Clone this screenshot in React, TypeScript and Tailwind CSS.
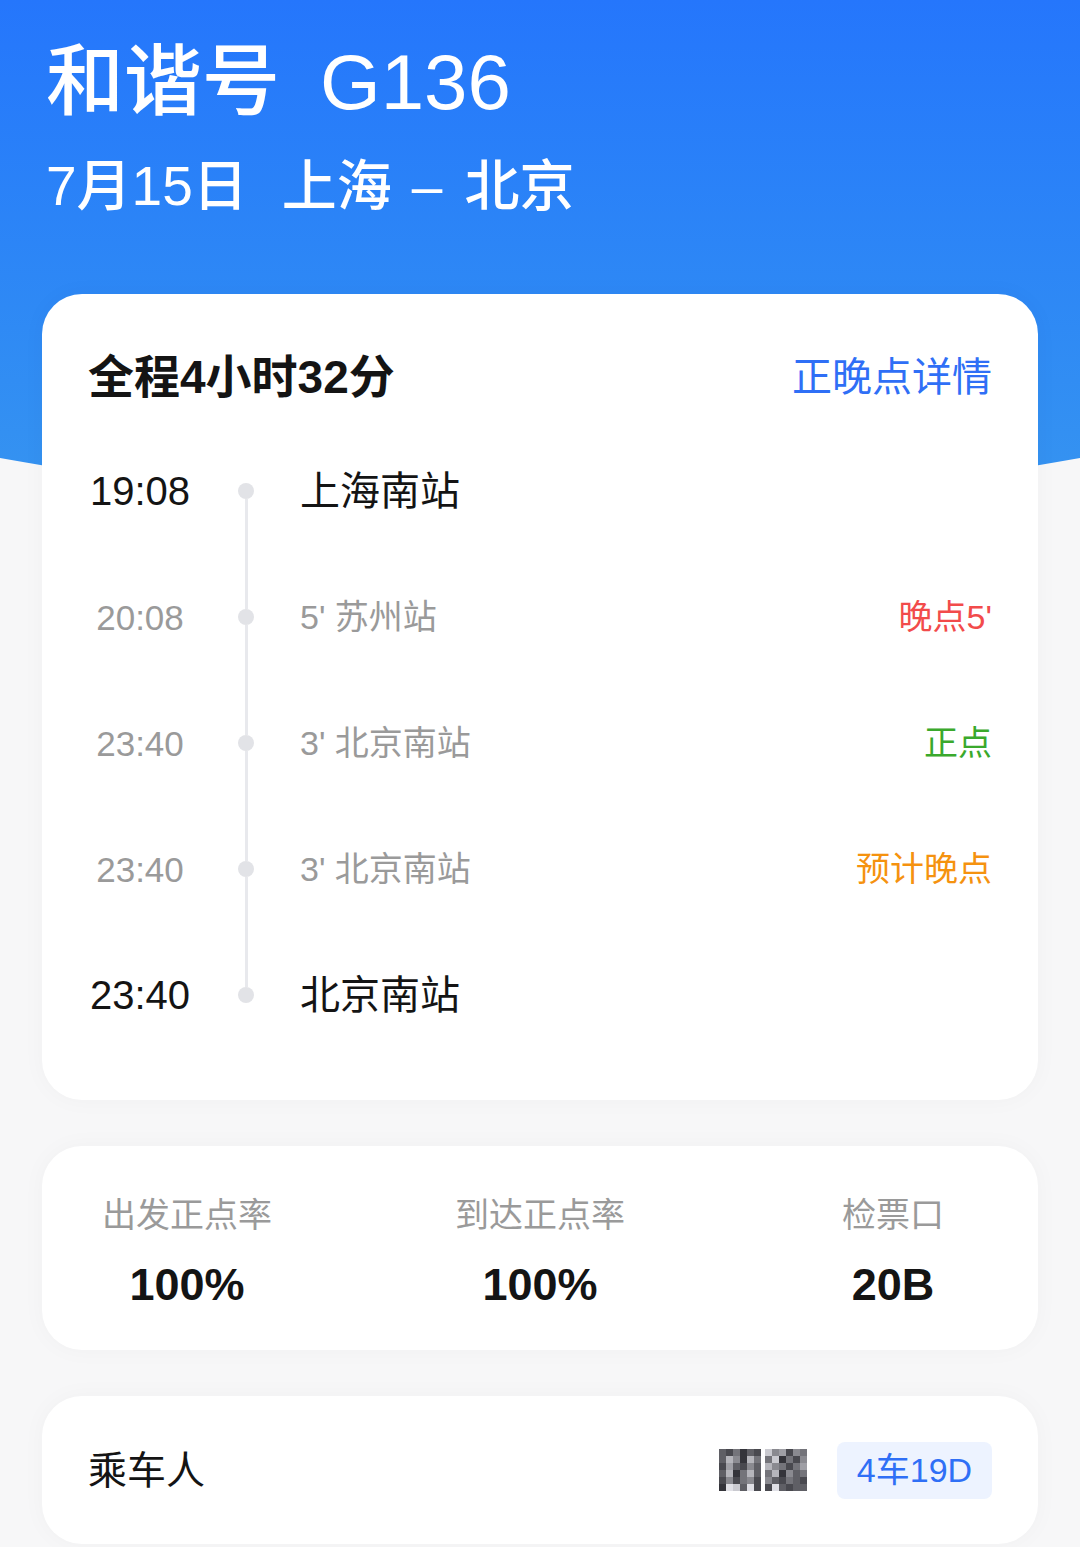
import React from "react";

const stops = [
  { time: "19:08", name: "上海南站", main: true },
  { time: "20:08", name: "5' 苏州站", status: "晚点5'", color: "text-[#f24b4b]" },
  { time: "23:40", name: "3' 北京南站", status: "正点", color: "text-[#3aa92c]" },
  { time: "23:40", name: "3' 北京南站", status: "预计晚点", color: "text-[#f5920f]" },
  { time: "23:40", name: "北京南站", main: true },
];

// rough mosaic of the blurred passenger name
const mosaic = [
  [0.7, 0.8, 0.6, 0.9, 0.7, 0.8, 0.2, 0.5, 0.4, 0.8, 0.5, 0.6],
  [0.7, 0.3, 0.5, 0.9, 0.3, 0.6, 0.6, 0.2, 0.9, 0.6, 0.8, 0.5],
  [0.8, 0.4, 0.7, 0.8, 0.5, 0.7, 0.3, 0.5, 0.6, 0.8, 0.6, 0.4],
  [0.7, 0.3, 0.9, 0.6, 0.3, 0.7, 0.6, 0.3, 0.9, 0.5, 0.7, 0.6],
  [0.8, 0.5, 0.8, 0.6, 0.5, 0.8, 0.5, 0.7, 0.8, 0.6, 0.7, 0.8],
  [0.9, 0.1, 0.2, 0.7, 0.1, 0.8, 0.8, 0.1, 0.7, 0.8, 0.7, 0.7],
];

const Mosaic = () => (
  <svg width="88" height="42" viewBox="0 0 88 42">
    {mosaic.map((row, r) =>
      row.map((v, c) => {
        const g = Math.round(245 - v * 215);
        return (
          <rect
            key={`${r}-${c}`}
            x={c * 7 + (c >= 6 ? 4 : 0)}
            y={r * 7}
            width="7"
            height="7"
            fill={`rgb(${g},${g},${g + 6})`}
          />
        );
      })
    )}
  </svg>
);

export default function App() {
  return (
    <div className="min-h-[1547px] w-[1080px] bg-[#f7f7f8] font-['Liberation_Sans','Noto_Sans_CJK_SC',sans-serif] text-[#141414]">
      <div className="h-[504px] bg-gradient-to-b from-[#2576fc] to-[#3694f0] px-[46px] pt-[43px] text-white [clip-path:ellipse(1294px_504px_at_50%_0)]">
        <div className="flex h-[78px] items-center text-[78px] font-medium leading-none">
          <span>和谐号</span>
          <span className="ml-[40px]">G136</span>
        </div>
        <div className="mt-[38px] flex h-[55px] items-center text-[55px] font-medium leading-none">
          <span>7月15日</span>
          <span className="ml-[34px]">上海</span>
          <span className="ml-[20px]">–</span>
          <span className="ml-[22px]">北京</span>
        </div>
      </div>

      <div className="relative z-10 -mt-[210px] flex flex-col gap-[46px] px-[42px] pb-[4px]">
        <div className="rounded-[40px] bg-white px-[46px] pb-[42px] pt-[54px] shadow-[0_0_24px_rgba(0,0,0,0.03)]">
          <div className="flex h-[58px] items-center justify-between">
            <span className="text-[46px] font-bold leading-none">全程4小时32分</span>
            <span className="text-[40px] leading-none text-[#2f6ff6]">正晚点详情</span>
          </div>
          <div className="mt-[22px] flex flex-col">
            {stops.map((s, i) => (
              <div key={i} className="flex h-[126px] items-stretch">
                <div
                  className={
                    s.main
                      ? "flex w-[104px] items-center justify-center text-[40px] leading-none"
                      : "flex w-[104px] items-center justify-center text-[35px] leading-none text-[#9a9a9a]"
                  }
                >
                  {s.time}
                </div>
                <div className="ml-[46px] flex w-[16px] flex-col items-center">
                  <div className={i === 0 ? "w-[3px] flex-1" : "w-[3px] flex-1 bg-[#e8e9ed]"} />
                  <div className="h-[16px] w-[16px] rounded-full bg-[#e2e3e7]" />
                  <div className={i === stops.length - 1 ? "w-[3px] flex-1" : "w-[3px] flex-1 bg-[#e8e9ed]"} />
                </div>
                <div className="ml-[46px] flex flex-1 items-center justify-between">
                  <span
                    className={
                      s.main ? "text-[40px] leading-none" : "text-[34px] leading-none text-[#9a9a9a]"
                    }
                  >
                    {s.name}
                  </span>
                  {s.status && (
                    <span className={`text-[34px] leading-none ${s.color}`}>{s.status}</span>
                  )}
                </div>
              </div>
            ))}
          </div>
        </div>

        <div className="flex h-[204px] items-start justify-center gap-[153px] rounded-[40px] bg-white pt-[52px] shadow-[0_0_24px_rgba(0,0,0,0.03)]">
          {[
            ["出发正点率", "100%"],
            ["到达正点率", "100%"],
            ["检票口", "20B"],
          ].map(([label, value]) => (
            <div key={label} className="flex w-[200px] flex-col items-center">
              <span className="text-[34px] leading-none text-[#9a9a9a]">{label}</span>
              <span className="mt-[30px] text-[45px] font-semibold leading-none">{value}</span>
            </div>
          ))}
        </div>

        <div className="flex h-[148px] items-center justify-between rounded-[40px] bg-white px-[46px] shadow-[0_0_24px_rgba(0,0,0,0.03)]">
          <span className="text-[39px] leading-none">乘车人</span>
          <div className="flex items-center">
            <Mosaic />
            <span className="ml-[30px] flex h-[57px] w-[155px] items-center justify-center rounded-[8px] bg-[#edf3ff] text-[34px] leading-none text-[#2f6ff6]">
              4车19D
            </span>
          </div>
        </div>
      </div>
    </div>
  );
}
